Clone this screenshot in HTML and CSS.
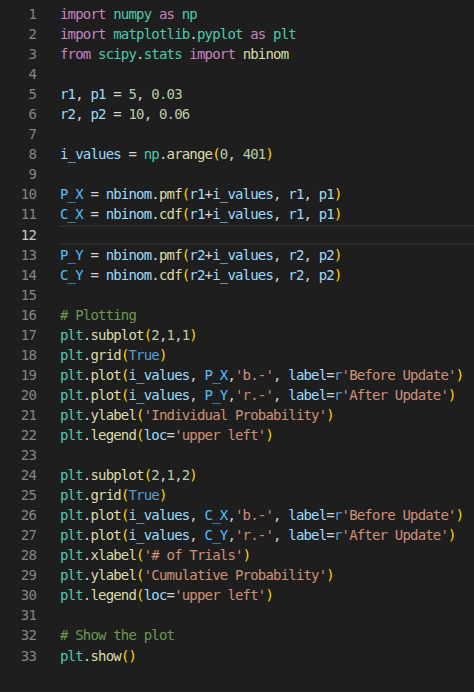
FILE: index.html
```html
<!DOCTYPE html>
<html>
<head>
<meta charset="utf-8">
<link rel="stylesheet" href="styles.css">
</head>
<body>
<div class="editor">
<div class="row"><span class="ln">1</span><code><span class="k">import</span> <span class="m">numpy</span> <span class="k">as</span> <span class="m">np</span></code></div>
<div class="row"><span class="ln">2</span><code><span class="k">import</span> <span class="m">matplotlib</span>.<span class="m">pyplot</span> <span class="k">as</span> <span class="m">plt</span></code></div>
<div class="row"><span class="ln">3</span><code><span class="k">from</span> <span class="m">scipy</span>.<span class="m">stats</span> <span class="k">import</span> <span class="f">nbinom</span></code></div>
<div class="row"><span class="ln">4</span><code></code></div>
<div class="row"><span class="ln">5</span><code><span class="v">r1</span>, <span class="v">p1</span> = <span class="n">5</span>, <span class="n">0.03</span></code></div>
<div class="row"><span class="ln">6</span><code><span class="v">r2</span>, <span class="v">p2</span> = <span class="n">10</span>, <span class="n">0.06</span></code></div>
<div class="row"><span class="ln">7</span><code></code></div>
<div class="row"><span class="ln">8</span><code><span class="v">i_values</span> = <span class="m">np</span>.<span class="f">arange</span><span class="b">(</span><span class="n">0</span>, <span class="n">401</span><span class="b">)</span></code></div>
<div class="row"><span class="ln">9</span><code></code></div>
<div class="row"><span class="ln">10</span><code><span class="c">P_X</span> = <span class="v">nbinom</span>.<span class="f">pmf</span><span class="b">(</span><span class="v">r1</span>+<span class="v">i_values</span>, <span class="v">r1</span>, <span class="v">p1</span><span class="b">)</span></code></div>
<div class="row"><span class="ln">11</span><code><span class="c">C_X</span> = <span class="v">nbinom</span>.<span class="f">cdf</span><span class="b">(</span><span class="v">r1</span>+<span class="v">i_values</span>, <span class="v">r1</span>, <span class="v">p1</span><span class="b">)</span></code></div>
<div class="row current"><span class="ln">12</span><code class="curline"></code></div>
<div class="row"><span class="ln">13</span><code><span class="c">P_Y</span> = <span class="v">nbinom</span>.<span class="f">pmf</span><span class="b">(</span><span class="v">r2</span>+<span class="v">i_values</span>, <span class="v">r2</span>, <span class="v">p2</span><span class="b">)</span></code></div>
<div class="row"><span class="ln">14</span><code><span class="c">C_Y</span> = <span class="v">nbinom</span>.<span class="f">cdf</span><span class="b">(</span><span class="v">r2</span>+<span class="v">i_values</span>, <span class="v">r2</span>, <span class="v">p2</span><span class="b">)</span></code></div>
<div class="row"><span class="ln">15</span><code></code></div>
<div class="row"><span class="ln">16</span><code><span class="cm"># Plotting</span></code></div>
<div class="row"><span class="ln">17</span><code><span class="m">plt</span>.<span class="f">subplot</span><span class="b">(</span><span class="n">2</span>,<span class="n">1</span>,<span class="n">1</span><span class="b">)</span></code></div>
<div class="row"><span class="ln">18</span><code><span class="m">plt</span>.<span class="f">grid</span><span class="b">(</span><span class="bl">True</span><span class="b">)</span></code></div>
<div class="row"><span class="ln">19</span><code><span class="m">plt</span>.<span class="f">plot</span><span class="b">(</span><span class="v">i_values</span>, <span class="c">P_X</span>,<span class="s">'b.-'</span>, <span class="v">label</span>=<span class="bl">r</span><span class="s">'Before Update'</span><span class="b">)</span></code></div>
<div class="row"><span class="ln">20</span><code><span class="m">plt</span>.<span class="f">plot</span><span class="b">(</span><span class="v">i_values</span>, <span class="c">P_Y</span>,<span class="s">'r.-'</span>, <span class="v">label</span>=<span class="bl">r</span><span class="s">'After Update'</span><span class="b">)</span></code></div>
<div class="row"><span class="ln">21</span><code><span class="m">plt</span>.<span class="f">ylabel</span><span class="b">(</span><span class="s">'Individual Probability'</span><span class="b">)</span></code></div>
<div class="row"><span class="ln">22</span><code><span class="m">plt</span>.<span class="f">legend</span><span class="b">(</span><span class="v">loc</span>=<span class="s">'upper left'</span><span class="b">)</span></code></div>
<div class="row"><span class="ln">23</span><code></code></div>
<div class="row"><span class="ln">24</span><code><span class="m">plt</span>.<span class="f">subplot</span><span class="b">(</span><span class="n">2</span>,<span class="n">1</span>,<span class="n">2</span><span class="b">)</span></code></div>
<div class="row"><span class="ln">25</span><code><span class="m">plt</span>.<span class="f">grid</span><span class="b">(</span><span class="bl">True</span><span class="b">)</span></code></div>
<div class="row"><span class="ln">26</span><code><span class="m">plt</span>.<span class="f">plot</span><span class="b">(</span><span class="v">i_values</span>, <span class="c">C_X</span>,<span class="s">'b.-'</span>, <span class="v">label</span>=<span class="bl">r</span><span class="s">'Before Update'</span><span class="b">)</span></code></div>
<div class="row"><span class="ln">27</span><code><span class="m">plt</span>.<span class="f">plot</span><span class="b">(</span><span class="v">i_values</span>, <span class="c">C_Y</span>,<span class="s">'r.-'</span>, <span class="v">label</span>=<span class="bl">r</span><span class="s">'After Update'</span><span class="b">)</span></code></div>
<div class="row"><span class="ln">28</span><code><span class="m">plt</span>.<span class="f">xlabel</span><span class="b">(</span><span class="s">'# of Trials'</span><span class="b">)</span></code></div>
<div class="row"><span class="ln">29</span><code><span class="m">plt</span>.<span class="f">ylabel</span><span class="b">(</span><span class="s">'Cumulative Probability'</span><span class="b">)</span></code></div>
<div class="row"><span class="ln">30</span><code><span class="m">plt</span>.<span class="f">legend</span><span class="b">(</span><span class="v">loc</span>=<span class="s">'upper left'</span><span class="b">)</span></code></div>
<div class="row"><span class="ln">31</span><code></code></div>
<div class="row"><span class="ln">32</span><code><span class="cm"># Show the plot</span></code></div>
<div class="row"><span class="ln">33</span><code><span class="m">plt</span>.<span class="f">show</span><span class="b">()</span></code></div>
</div>
</body>
</html>
```
FILE: styles.css
```css
html, body {
  margin: 0;
  padding: 0;
  background: #1e1e1e;
}
body {
  width: 474px;
  height: 692px;
  overflow: hidden;
}
.editor {
  padding-top: 4px;
  font-family: "DejaVu Sans Mono", "Liberation Mono", monospace;
  font-size: 14px;
  letter-spacing: -0.82px;
  color: #d4d4d4;
}
.row {
  display: flex;
  height: 20.06px;
  line-height: 20.06px;
  white-space: pre;
}
.ln {
  width: 36px;
  text-align: right;
  color: #858585;
  flex: none;
}
.row code {
  font: inherit;
  margin-left: 24px;
  flex: 1;
}
.current .ln {
  color: #c6c6c6;
}
.curline {
  box-sizing: border-box;
  border-top: 2px solid #2b2b2b;
  border-bottom: 2px solid #2b2b2b;
}
.k { color: #c586c0; }
.m { color: #4ec9b0; }
.v { color: #9cdcfe; }
.c { color: #4fc1ff; }
.f { color: #dcdcaa; }
.n { color: #b5cea8; }
.s { color: #ce9178; }
.cm { color: #6a9955; }
.b { color: #ffd700; }
.bl { color: #569cd6; }
```
